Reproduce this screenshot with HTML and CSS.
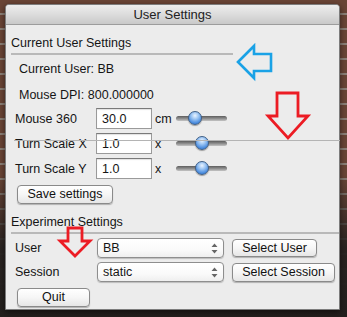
FILE: index.html
```html
<!DOCTYPE html>
<html>
<head>
<meta charset="utf-8">
<link rel="stylesheet" href="styles.css">
</head>
<body>
<div class="desk">
  <div class="window">
    <div class="titlebar">User Settings</div>
    <div class="content">
      <div class="heading h1">Current User Settings</div>
      <div class="rule rule-short"></div>
      <div class="info info-user">Current User: BB</div>
      <div class="info info-dpi">Mouse DPI: 800.000000</div>

      <div class="row row-first">
        <span class="label">Mouse 360</span>
        <span class="field">30.0</span>
        <span class="unit">cm</span>
        <span class="slider"><span class="thumb" style="left:12px"></span></span>
      </div>
      <div class="row">
        <span class="label">Turn Scale X</span>
        <span class="field">1.0</span>
        <span class="unit">x</span>
        <span class="slider"><span class="thumb" style="left:19px"></span></span>
      </div>
      <div class="row">
        <span class="label">Turn Scale Y</span>
        <span class="field">1.0</span>
        <span class="unit">x</span>
        <span class="slider"><span class="thumb" style="left:19px"></span></span>
      </div>

      <div class="btn btn-save">Save settings</div>

      <div class="heading h2">Experiment Settings</div>
      <div class="rule rule-long"></div>

      <div class="srow srow-first">
        <span class="slabel">User</span>
        <span class="select">BB<svg class="updown" width="7" height="11" viewBox="0 0 7 11"><path d="M3.5 0.5 L6.5 4 L0.5 4 Z M3.5 10.5 L6.5 7 L0.5 7 Z" fill="#666"/></svg></span>
        <span class="btn btn-user">Select User</span>
      </div>
      <div class="srow">
        <span class="slabel">Session</span>
        <span class="select">static<svg class="updown" width="7" height="11" viewBox="0 0 7 11"><path d="M3.5 0.5 L6.5 4 L0.5 4 Z M3.5 10.5 L6.5 7 L0.5 7 Z" fill="#666"/></svg></span>
        <span class="btn btn-session">Select Session</span>
      </div>

      <div class="btn btn-quit">Quit</div>
    </div>
  </div>

  <svg class="overlay" width="347" height="317" viewBox="0 0 347 317">
    <line x1="14" y1="140.5" x2="340" y2="140.5" stroke="#b4b4b4" stroke-width="1"/>
    <polygon points="238,62 254,46 254,54 271,54 271,71 254,71 254,78" fill="none" stroke="#1aa2e6" stroke-width="2.6" stroke-linejoin="miter"/>
    <polygon points="277,93 298,93 298,116 308,116 288,138 268,116 277,116" fill="none" stroke="#ec1c24" stroke-width="2.8" stroke-linejoin="miter"/>
    <polygon points="68,228 82,228 82,241 90,241 75,256 60,241 68,241" fill="none" stroke="#ec1c24" stroke-width="2.8" stroke-linejoin="miter"/>
  </svg>
</div>
</body>
</html>
```

FILE: styles.css
```css
html, body {
  margin: 0;
  padding: 0;
}

body {
  width: 347px;
  height: 317px;
  overflow: hidden;
  font-family: "Liberation Sans", Arial, sans-serif;
  font-size: 12.5px;
  color: #151515;
}

.desk {
  position: relative;
  width: 347px;
  height: 317px;
  padding-top: 4px;
  box-sizing: border-box;
  background:
    linear-gradient(to bottom, rgba(30,26,24,0) 0%, rgba(30,26,24,0) 55%, rgba(38,34,32,0.95) 78%, #231f1d 100%),
    repeating-linear-gradient(to bottom, #6a4536 0px, #6a4536 13px, #8c8077 13px, #8c8077 15px);
}

.window {
  margin-left: 5px;
  width: 335px;
  height: 306px;
  box-sizing: border-box;
  border: 1px solid #7d7d7d;
  border-radius: 4px 4px 0 0;
  background: #ececec;
  box-shadow: 0 2px 6px rgba(0,0,0,0.55);
  overflow: hidden;
}

.titlebar {
  height: 19px;
  line-height: 19px;
  text-align: center;
  font-size: 13px;
  color: #222;
  background: linear-gradient(to bottom, #ededed 0%, #dcdcdc 50%, #c9c9c9 100%);
  border-bottom: 1px solid #9c9c9c;
}

.content {
  display: flex;
  flex-direction: column;
  align-items: flex-start;
}

.heading {
  height: 16px;
  line-height: 16px;
  margin-left: 5px;
}

.h1 { margin-top: 10px; }
.h2 { margin-top: 10px; }

.rule {
  height: 2px;
  margin-top: 2px;
  margin-left: 5px;
  background: #b9b9b9;
}

.rule-short { width: 222px; }
.rule-long { width: 328px; }

.info {
  height: 16px;
  line-height: 16px;
  margin-left: 13px;
}

.info-user { margin-top: 6px; }
.info-dpi { margin-top: 10px; }

.row {
  display: flex;
  align-items: center;
  height: 21px;
  margin-top: 4px;
  margin-left: 9px;
}

.row-first { margin-top: 5px; }

.label {
  width: 81px;
}

.field {
  width: 56px;
  height: 21px;
  line-height: 21px;
  box-sizing: border-box;
  padding-left: 5px;
  background: #fff;
  border: 1px solid #9a9a9a;
  border-top-color: #7a7a7a;
  box-shadow: inset 0 1px 1px rgba(0,0,0,0.12);
}

.unit {
  width: 21px;
  margin-left: 3px;
}

.slider {
  position: relative;
  width: 51px;
  height: 5px;
  border-radius: 3px;
  background: linear-gradient(to bottom, #5d5d5d 0%, #8d8d8d 50%, #c4c4c4 100%);
}

.thumb {
  position: absolute;
  top: -5px;
  width: 14px;
  height: 14px;
  box-sizing: border-box;
  border-radius: 50%;
  border: 1px solid #3f5f86;
  background: radial-gradient(circle at 50% 30%, #eaf4ff 0%, #9cc5f3 35%, #4e8fe0 70%, #2d6ec5 100%);
  box-shadow: 0 1px 1px rgba(0,0,0,0.35);
}

.btn {
  box-sizing: border-box;
  height: 19px;
  line-height: 17px;
  text-align: center;
  border: 1px solid #8a8a8a;
  border-radius: 4px;
  background: linear-gradient(to bottom, #ffffff 0%, #f6f6f6 50%, #e6e6e6 100%);
  box-shadow: 0 1px 1px rgba(0,0,0,0.25);
  color: #111;
}

.btn-save {
  width: 96px;
  margin-top: 6px;
  margin-left: 11px;
}

.btn-quit {
  width: 73px;
  margin-top: 6px;
  margin-left: 11px;
}

.srow {
  display: flex;
  align-items: center;
  height: 20px;
  margin-top: 4px;
  margin-left: 9px;
}

.srow-first { margin-top: 4px; }

.slabel {
  width: 82px;
}

.select {
  position: relative;
  width: 127px;
  height: 20px;
  line-height: 18px;
  box-sizing: border-box;
  padding-left: 5px;
  border: 1px solid #8e8e8e;
  border-radius: 4px;
  background: linear-gradient(to bottom, #ffffff 0%, #fafafa 60%, #efefef 100%);
  box-shadow: 0 1px 1px rgba(0,0,0,0.2);
}

.updown {
  position: absolute;
  right: 5px;
  top: 4px;
}

.btn-user {
  width: 85px;
  height: 18px;
  line-height: 16px;
  margin-left: 8px;
}

.btn-session {
  width: 103px;
  height: 19px;
  line-height: 17px;
  margin-left: 8px;
}

.overlay {
  position: absolute;
  left: 0;
  top: 0;
  pointer-events: none;
}
```
